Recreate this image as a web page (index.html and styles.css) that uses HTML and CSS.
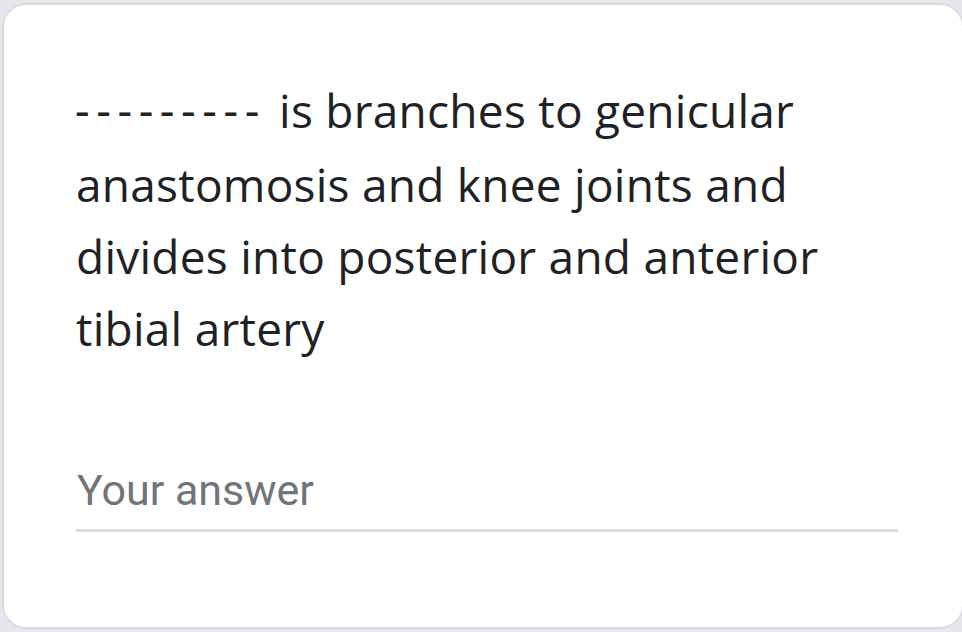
FILE: index.html
```html
<!DOCTYPE html>
<html lang="en">
<head>
<meta charset="utf-8">
<title>Question</title>
<link rel="stylesheet" href="styles.css">
</head>
<body>
<div class="card">
  <div class="question"><span class="blank">---------</span> is branches to genicular<br>anastomosis and knee joints and<br>divides into posterior and anterior<br>tibial artery</div>
  <div class="answer">
    <div class="placeholder">Your answer</div>
    <div class="underline"></div>
  </div>
</div>
</body>
</html>
```

FILE: styles.css
```css
html, body {
  margin: 0;
  padding: 0;
}
body {
  background: #e6e6ec;
  width: 962px;
  height: 632px;
  overflow: hidden;
}
.card {
  box-sizing: border-box;
  margin: 3px 0 0 2px;
  width: 962px;
  height: 626px;
  background: #ffffff;
  border: 2px solid #dadce0;
  border-radius: 24px;
  padding: 69px 72px 0 72px;
}
.question {
  font-family: "Open Sans", "Liberation Sans", sans-serif;
  font-size: 46px;
  line-height: 72px;
  letter-spacing: 0.25px;
  color: #202124;
  white-space: nowrap;
}
.blank {
  font-family: Roboto, "Liberation Sans", sans-serif;
  letter-spacing: 8.5px;
}
.answer {
  margin-top: 100px;
  width: 822px;
}
.placeholder {
  font-family: Roboto, "Liberation Sans", sans-serif;
  font-size: 43px;
  line-height: 52px;
  color: #70757a;
  padding-left: 1px;
}
.underline {
  margin-top: 13px;
  height: 3px;
  background: #dadce0;
}
```
